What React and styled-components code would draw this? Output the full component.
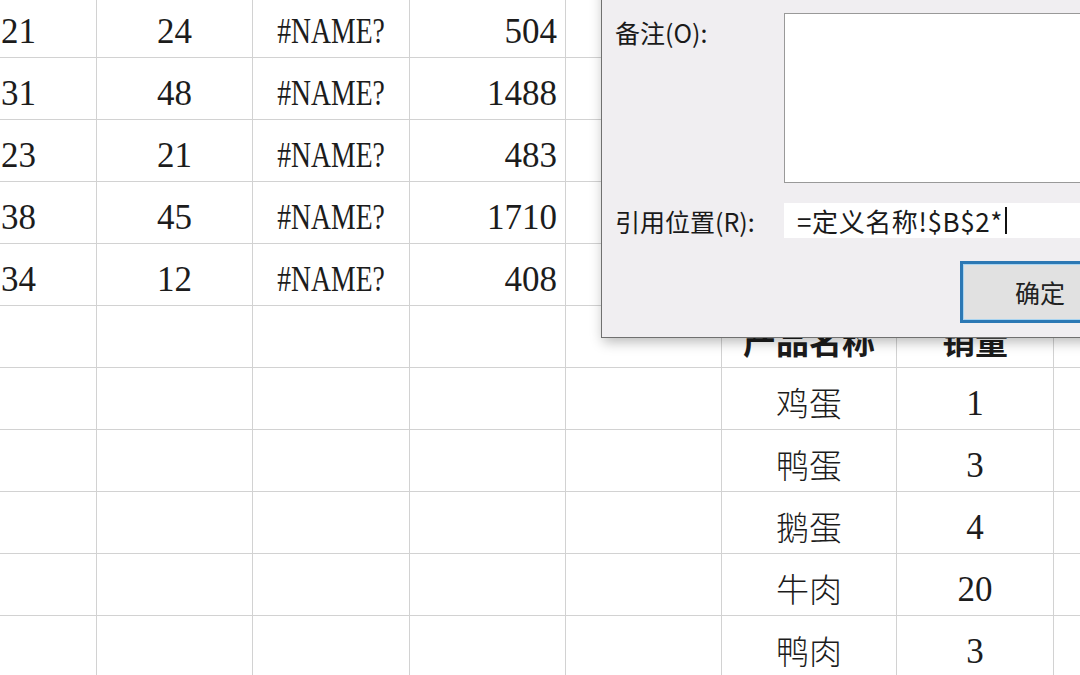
import React from 'react';
import styled, { createGlobalStyle } from 'styled-components';

const GlobalStyle = createGlobalStyle`
  html, body {
    margin: 0;
    padding: 0;
    background: #ffffff;
  }
  body {
    font-family: 'Liberation Serif', 'Noto Sans CJK SC', serif;
  }
`;

const COLS = [156, 156, 157, 156, 156, 175, 157, 160];

const rows = [
  ['21', '24', '#NAME?', '504'],
  ['31', '48', '#NAME?', '1488'],
  ['23', '21', '#NAME?', '483'],
  ['38', '45', '#NAME?', '1710'],
  ['34', '12', '#NAME?', '408'],
  ['', '', '', '', '', '产品名称', '销量'],
  ['', '', '', '', '', '鸡蛋', '1'],
  ['', '', '', '', '', '鸭蛋', '3'],
  ['', '', '', '', '', '鹅蛋', '4'],
  ['', '', '', '', '', '牛肉', '20'],
  ['', '', '', '', '', '鸭肉', '3'],
];

const Screen = styled.div`
  position: relative;
  width: 1080px;
  height: 675px;
  overflow: hidden;
  background: #ffffff;
`;

const Sheet = styled.div`
  display: grid;
  grid-template-columns: ${COLS.map((w) => `${w}px`).join(' ')};
  grid-auto-rows: 62px;
  margin-left: -59px;
  margin-top: -4px;
  width: max-content;
`;

const Cell = styled.div`
  display: flex;
  align-items: flex-end;
  justify-content: ${(p) => (p.$align === 'right' ? 'flex-end' : 'center')};
  padding: 0 8px 8px;
  box-sizing: border-box;
  border-right: 1px solid #d2d2d2;
  border-bottom: 1px solid #d2d2d2;
  font-family: 'Liberation Serif', 'Noto Sans CJK SC', serif;
  font-size: 35px;
  font-weight: ${(p) => (p.$bold ? 700 : 400)};
  line-height: 1;
  color: #1c1c1c;
  white-space: nowrap;
`;

const ErrorText = styled.span`
  display: inline-block;
  transform: scaleX(0.79);
  transform-origin: center;
`;

const CjkText = styled.span`
  font-family: 'Noto Sans CJK SC', sans-serif;
  font-size: 33px;
  font-weight: ${(p) => (p.$bold ? 700 : 300)};
  line-height: 1;
  padding-bottom: 2px;
`;

const Dialog = styled.div`
  position: absolute;
  left: 601px;
  top: -30px;
  width: 560px;
  box-sizing: border-box;
  padding: 42px 0 14px 13px;
  background: #f0eef1;
  border: 1px solid #707070;
  box-shadow: 2px 4px 12px rgba(0, 0, 0, 0.28);
  display: grid;
  grid-template-columns: 169px 1fr;
  row-gap: 20px;
  font-family: 'Noto Sans CJK SC', 'Liberation Sans', sans-serif;
  font-size: 25px;
  color: #1a1a1a;
`;

const Label = styled.div`
  line-height: 30px;
  align-self: ${(p) => (p.$top ? 'start' : 'center')};
  margin-top: ${(p) => (p.$top ? '4px' : '0')};
  white-space: nowrap;
`;

const NoteBox = styled.div`
  height: 170px;
  background: #ffffff;
  border: 1px solid #999999;
  box-sizing: border-box;
`;

const RefInput = styled.div`
  height: 35px;
  background: #ffffff;
  display: flex;
  align-items: center;
  padding-left: 13px;
  font-size: 26px;
  letter-spacing: 0.6px;
  white-space: nowrap;
`;

const Caret = styled.span`
  display: inline-block;
  width: 0;
  height: 27px;
  margin-left: 2px;
  border-left: 2px solid #111111;
`;

const ButtonRow = styled.div`
  grid-column: 1 / -1;
  display: flex;
  gap: 16px;
  padding-left: 345px;
  margin-top: 3px;
`;

const Button = styled.div`
  width: 164px;
  height: 62px;
  box-sizing: border-box;
  display: flex;
  align-items: center;
  justify-content: center;
  background: #e1e1e1;
  border: ${(p) => (p.$primary ? '3px solid #2c78b4' : '1px solid #adadad')};
  box-shadow: ${(p) => (p.$primary ? 'inset 0 0 0 1px #a9d4f0' : 'none')};
  font-size: 25px;
  color: #222222;
  flex-shrink: 0;
`;

const ButtonText = styled.span`
  margin-right: 4px;
`;

function renderValue(v, rowIndex) {
  if (v === '#NAME?') return <ErrorText>{v}</ErrorText>;
  if (/[\u4e00-\u9fff]/.test(v)) return <CjkText $bold={rowIndex === 5}>{v}</CjkText>;
  return v;
}

export default function App() {
  return (
    <Screen>
      <GlobalStyle />
      <Sheet>
        {rows.map((row, r) =>
          COLS.map((_, c) => {
            const v = row[c] || '';
            return (
              <Cell key={`${r}-${c}`} $align={c === 3 ? 'right' : 'center'} $bold={r === 5}>
                {renderValue(v, r)}
              </Cell>
            );
          })
        )}
      </Sheet>
      <Dialog>
        <Label $top>备注(O):</Label>
        <NoteBox />
        <Label>引用位置(R):</Label>
        <RefInput>
          =定义名称!$B$2*
          <Caret />
        </RefInput>
        <ButtonRow>
          <Button $primary>
            <ButtonText>确定</ButtonText>
          </Button>
          <Button>
            <ButtonText>取消</ButtonText>
          </Button>
        </ButtonRow>
      </Dialog>
    </Screen>
  );
}
